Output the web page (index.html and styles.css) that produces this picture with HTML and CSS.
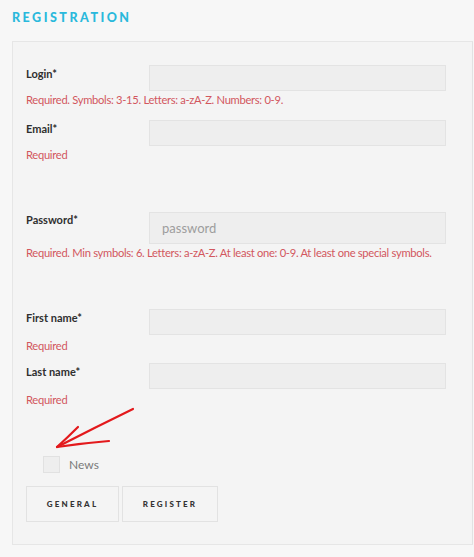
FILE: index.html
```html
<!DOCTYPE html>
<html>
<head>
<meta charset="utf-8">
<link rel="stylesheet" href="styles.css">
</head>
<body>
<h2 class="title">Registration</h2>
<div class="panel">
  <form class="form">
    <div class="group g-login">
      <div class="row">
        <label class="label">Login*</label>
        <input class="input" type="text">
      </div>
      <div class="error">Required. Symbols: 3-15. Letters: a-zA-Z. Numbers: 0-9.</div>
    </div>
    <div class="group g-email">
      <div class="row">
        <label class="label">Email*</label>
        <input class="input" type="text">
      </div>
      <div class="error">Required</div>
    </div>
    <div class="group g-pass">
      <div class="row">
        <label class="label">Password*</label>
        <input class="input input-tall" type="password" placeholder="password">
      </div>
      <div class="error">Required. Min symbols: 6. Letters: a-zA-Z. At least one: 0-9. At least one special symbols.</div>
    </div>
    <div class="group g-first">
      <div class="row">
        <label class="label">First name*</label>
        <input class="input" type="text">
      </div>
      <div class="error">Required</div>
    </div>
    <div class="group g-last">
      <div class="row">
        <label class="label">Last name*</label>
        <input class="input" type="text">
      </div>
      <div class="error">Required</div>
    </div>
    <label class="check">
      <span class="box"></span>
      <span class="check-text">News</span>
    </label>
    <div class="buttons">
      <button type="button" class="btn btn-general">General</button>
      <button type="button" class="btn btn-register">Register</button>
    </div>
  </form>
  <svg class="arrow" width="474" height="557" viewBox="0 0 474 557">
    <path d="M133 409 Q96 427 57 447" fill="none" stroke="#e3191c" stroke-width="2.2" stroke-linecap="round"/>
    <path d="M78 427 Q67 438 57 447 Q84 443 109 441" fill="none" stroke="#e3191c" stroke-width="2.2" stroke-linecap="round" stroke-linejoin="round"/>
  </svg>
</div>
</body>
</html>
```

FILE: styles.css
```css
html, body {
  margin: 0;
  padding: 0;
}
body {
  background: #f7f7f7;
  font-family: "Lato", "Open Sans", sans-serif;
  color: #333;
  padding-left: 12px;
  width: 461px;
}
.title {
  margin: 0;
  padding-top: 11px;
  height: 41px;
  font-family: "Lato", sans-serif;
  font-weight: 900;
  font-size: 12.5px;
  line-height: 14px;
  letter-spacing: 2.5px;
  text-transform: uppercase;
  color: #2ab9dc;
  box-sizing: border-box;
}
.panel {
  border: 1px solid #e6e6e6;
  border-right: 1px solid #e2e2e2;
  background: #f4f4f4;
  height: 504px;
  box-sizing: border-box;
  padding: 23px 24px 0 13px;
}
.form {
  display: flex;
  flex-direction: column;
}
.row {
  display: flex;
  align-items: flex-start;
}
.label {
  width: 123px;
  flex: none;
  font-size: 11px;
  font-weight: 700;
  line-height: 14px;
  padding-top: 2px;
  color: #2f2f2f;
}
.input {
  width: 297px;
  height: 26px;
  box-sizing: border-box;
  margin: 0;
  border: 1px solid #e3e3e3;
  background: #eeeeee;
  font-family: "Lato", sans-serif;
  font-size: 13px;
  padding: 0 12px;
  outline: none;
}
.input-tall {
  height: 32px;
}
.input::placeholder {
  color: #9d9d9d;
}
.error {
  font-size: 11.2px;
  letter-spacing: -0.3px;
  line-height: 16px;
  margin-top: 1px;
  white-space: nowrap;
  color: #d2575e;
}
.g-email { margin-top: 12px; }
.g-pass { margin-top: 49px; }
.g-pass .label { padding-top: 1px; }
.g-first { margin-top: 48px; }
.g-first .error { margin-top: 3px; }
.g-last { margin-top: 9px; }
.g-last .error { margin-top: 3px; }
.check {
  display: flex;
  align-items: center;
  margin-top: 48px;
  margin-left: 17px;
  height: 17px;
}
.box {
  width: 15px;
  height: 15px;
  border: 1px solid #e1e1e1;
  background: #eeeeee;
}
.check-text {
  margin-left: 9px;
  font-size: 12px;
  color: #7a7a7a;
}
.buttons {
  display: flex;
  gap: 3px;
  margin-top: 13px;
}
.btn {
  height: 36px;
  box-sizing: border-box;
  border: 1px solid #e2e2e2;
  background: #f4f4f4;
  font-family: "Lato", sans-serif;
  font-weight: 900;
  font-size: 8px;
  letter-spacing: 2.2px;
  text-transform: uppercase;
  color: #333;
  padding: 0;
}
.btn-general { width: 93px; }
.btn-register { width: 96px; }
.arrow {
  position: absolute;
  left: 0;
  top: 0;
  pointer-events: none;
}
```
